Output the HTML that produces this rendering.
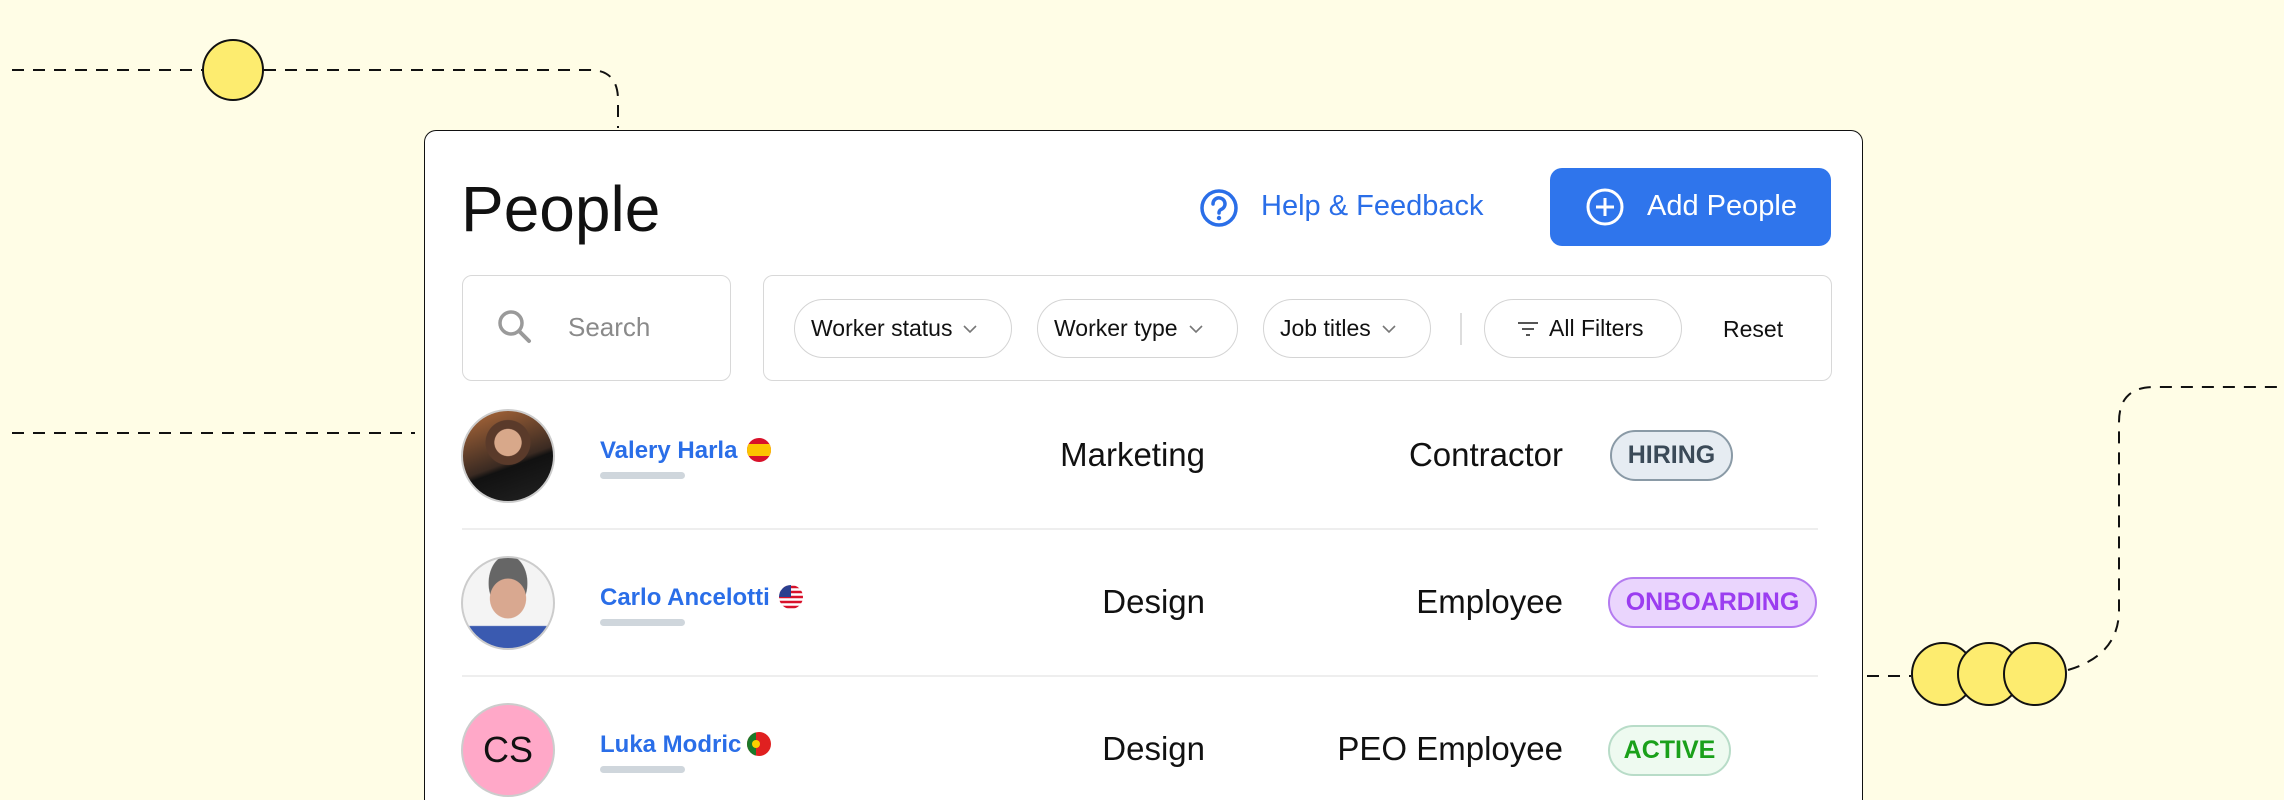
<!DOCTYPE html>
<html style="height:800px;overflow:hidden"><head><meta charset="utf-8"><style>
*{margin:0;padding:0;box-sizing:border-box}
body{width:2284px;height:800px;background:#fffde6;font-family:"Liberation Sans",sans-serif;position:relative;overflow:hidden}
.abs{position:absolute}
.card{left:424px;top:130px;width:1439px;height:670px;background:#fff;border:1.5px solid #111;border-bottom:none;border-radius:12px 12px 0 0}
.t{position:absolute;white-space:nowrap}
.chip{position:absolute;top:299px;height:59px;border:1.5px solid #d4d4d4;border-radius:30px;font-size:23px;color:#111;display:flex;align-items:center;padding-left:16px}
.chip svg{margin-left:10px}
.badge{position:absolute;height:51px;border-radius:26px;font-size:25px;font-weight:bold;display:flex;align-items:center;justify-content:center;border:2px solid}
.name{position:absolute;left:600px;font-size:24px;color:#2a6ee8;font-weight:bold}
.bar{position:absolute;left:600px;width:85px;height:7px;border-radius:4px;background:#cfd6dc}
.dept,.type{position:absolute;font-size:33px;color:#111;text-align:right}
.dept{right:1079px}.type{right:721px}
.div{position:absolute;left:462px;width:1356px;height:2px;background:#eee}
.av{position:absolute;left:461px;width:94px;height:94px;border-radius:50%;border:2px solid #ccc;overflow:hidden}
</style></head><body>
<svg class="abs" style="left:0;top:0" width="2284" height="800">
<g fill="none" stroke="#111" stroke-width="2" stroke-dasharray="12 9">
<path d="M12 70 H202"/>
<path d="M264 70 H590 Q618 70 618 100 V128"/>
<path d="M12 433 H415"/>
<path d="M1867 676 H1911"/>
<path d="M2068 670 Q2119 655 2119 610 V422 Q2119 387 2154 387 H2284"/>
</g>
<g fill="#fdec6f" stroke="#111" stroke-width="2">
<circle cx="233" cy="70" r="30"/>
<circle cx="1943" cy="674" r="31"/><circle cx="1989" cy="674" r="31"/><circle cx="2035" cy="674" r="31"/>
</g>
</svg>
<div class="abs card"></div>
<div class="t" style="left:461px;top:172px;font-size:64px;color:#111">People</div>
<svg class="abs" style="left:1199px;top:188px" width="40" height="40" viewBox="0 0 40 40"><circle cx="20" cy="20" r="17" fill="none" stroke="#2a6ee8" stroke-width="3.5"/><path d="M14 16a6 6 0 1 1 8 5.5c-1.5.8-2 1.5-2 3.5" fill="none" stroke="#2a6ee8" stroke-width="3.5" stroke-linecap="round"/><circle cx="20" cy="30" r="2.2" fill="#2a6ee8"/></svg>
<div class="t" style="left:1261px;top:190px;font-size:29px;color:#2a6ee8">Help &amp; Feedback</div>
<div class="abs" style="left:1550px;top:168px;width:281px;height:78px;background:#2f75ec;border-radius:12px"></div>
<svg class="abs" style="left:1585px;top:187px" width="40" height="40" viewBox="0 0 40 40"><circle cx="20" cy="20" r="17" fill="none" stroke="#fff" stroke-width="3"/><path d="M20 11V29M11 20H29" stroke="#fff" stroke-width="3"/></svg>
<div class="t" style="left:1647px;top:190px;font-size:29px;color:#fff">Add People</div>
<div class="abs" style="left:462px;top:275px;width:269px;height:106px;border:1.5px solid #d8d8d8;border-radius:10px"></div>
<svg class="abs" style="left:495px;top:307px" width="40" height="40" viewBox="0 0 40 40"><circle cx="16" cy="16" r="11" fill="none" stroke="#9a9a9a" stroke-width="3.5"/><path d="M24 24L34 34" stroke="#9a9a9a" stroke-width="4" stroke-linecap="round"/></svg>
<div class="t" style="left:568px;top:312px;font-size:26px;color:#8a8a8a">Search</div>
<div class="abs" style="left:763px;top:275px;width:1069px;height:106px;border:1.5px solid #d8d8d8;border-radius:10px"></div>
<svg width="0" height="0"><defs><path id="cv" d="M2 2l6 6 6-6" fill="none" stroke="#777" stroke-width="1.6"/></defs></svg>
<div class="chip" style="left:794px;width:218px">Worker status<svg width="16" height="10"><use href="#cv"/></svg></div>
<div class="chip" style="left:1037px;width:201px">Worker type<svg width="16" height="10"><use href="#cv"/></svg></div>
<div class="chip" style="left:1263px;width:168px">Job titles<svg width="16" height="10"><use href="#cv"/></svg></div>
<div class="abs" style="left:1460px;top:313px;width:2px;height:32px;background:#ddd"></div>
<div class="chip" style="left:1484px;width:198px;padding-left:32px"><svg width="22" height="18" style="margin:0 10px 0 0"><path d="M1 3H21M5 9H17M9 15H13" stroke="#555" stroke-width="2"/></svg>All Filters</div>
<div class="t" style="left:1723px;top:316px;font-size:23px;color:#111">Reset</div>

<div class="av" style="top:409px;background:radial-gradient(circle at 50% 35%,#d8a88a 0 18%,#5a3a2a 19% 30%,transparent 31%),linear-gradient(160deg,#b06a3a,#3a2a22 55%,#111 60%,#222)"></div>
<div class="name" style="top:437px">Valery Harla</div>
<svg class="abs" style="left:747px;top:438px" width="24" height="24"><clipPath id="c1"><circle cx="12" cy="12" r="12"/></clipPath><g clip-path="url(#c1)"><rect width="24" height="24" fill="#d8112a"/><rect y="6" width="24" height="12" fill="#fcc400"/></g></svg>
<div class="bar" style="top:472px"></div>
<div class="dept" style="top:436px">Marketing</div>
<div class="type" style="top:436px">Contractor</div>
<div class="badge" style="left:1610px;top:430px;width:123px;background:#e6ecf2;border-color:#8a9aa6;color:#3b4a58">HIRING</div>
<div class="div" style="top:528px"></div>

<div class="av" style="top:556px;background:radial-gradient(ellipse at 50% 45%,#d9a890 0 28%,transparent 29%),radial-gradient(ellipse at 50% 28%,#666 0 30%,transparent 31%),linear-gradient(#f4f4f4 75%,#3a5ab0 76%)"></div>
<div class="name" style="top:584px">Carlo Ancelotti</div>
<svg class="abs" style="left:779px;top:585px" width="24" height="24"><clipPath id="c2"><circle cx="12" cy="12" r="12"/></clipPath><g clip-path="url(#c2)"><rect width="24" height="24" fill="#fff"/><path d="M0 2H24M0 7H24M0 12H24M0 17H24M0 22H24" stroke="#d8112a" stroke-width="2.5"/><rect width="12" height="12" fill="#2a3f8f"/></g></svg>
<div class="bar" style="top:619px"></div>
<div class="dept" style="top:583px">Design</div>
<div class="type" style="top:583px">Employee</div>
<div class="badge" style="left:1608px;top:577px;width:209px;background:#ead5fd;border-color:#b47cf0;color:#9b3df0">ONBOARDING</div>
<div class="div" style="top:675px"></div>

<div class="av" style="top:703px;background:#ffa8c8;display:flex;align-items:center;justify-content:center;font-size:36px;color:#111">CS</div>
<div class="name" style="top:731px">Luka Modric</div>
<svg class="abs" style="left:747px;top:732px" width="24" height="24"><clipPath id="c3"><circle cx="12" cy="12" r="12"/></clipPath><g clip-path="url(#c3)"><rect width="24" height="24" fill="#e02020"/><rect width="9" height="24" fill="#1a7a2a"/><circle cx="9" cy="12" r="4" fill="#fcd000"/></g></svg>
<div class="bar" style="top:766px"></div>
<div class="dept" style="top:730px">Design</div>
<div class="type" style="top:730px">PEO Employee</div>
<div class="badge" style="left:1608px;top:725px;width:123px;background:#eefaf0;border-color:#b8dcc8;color:#1aa01a">ACTIVE</div>
</body></html>
